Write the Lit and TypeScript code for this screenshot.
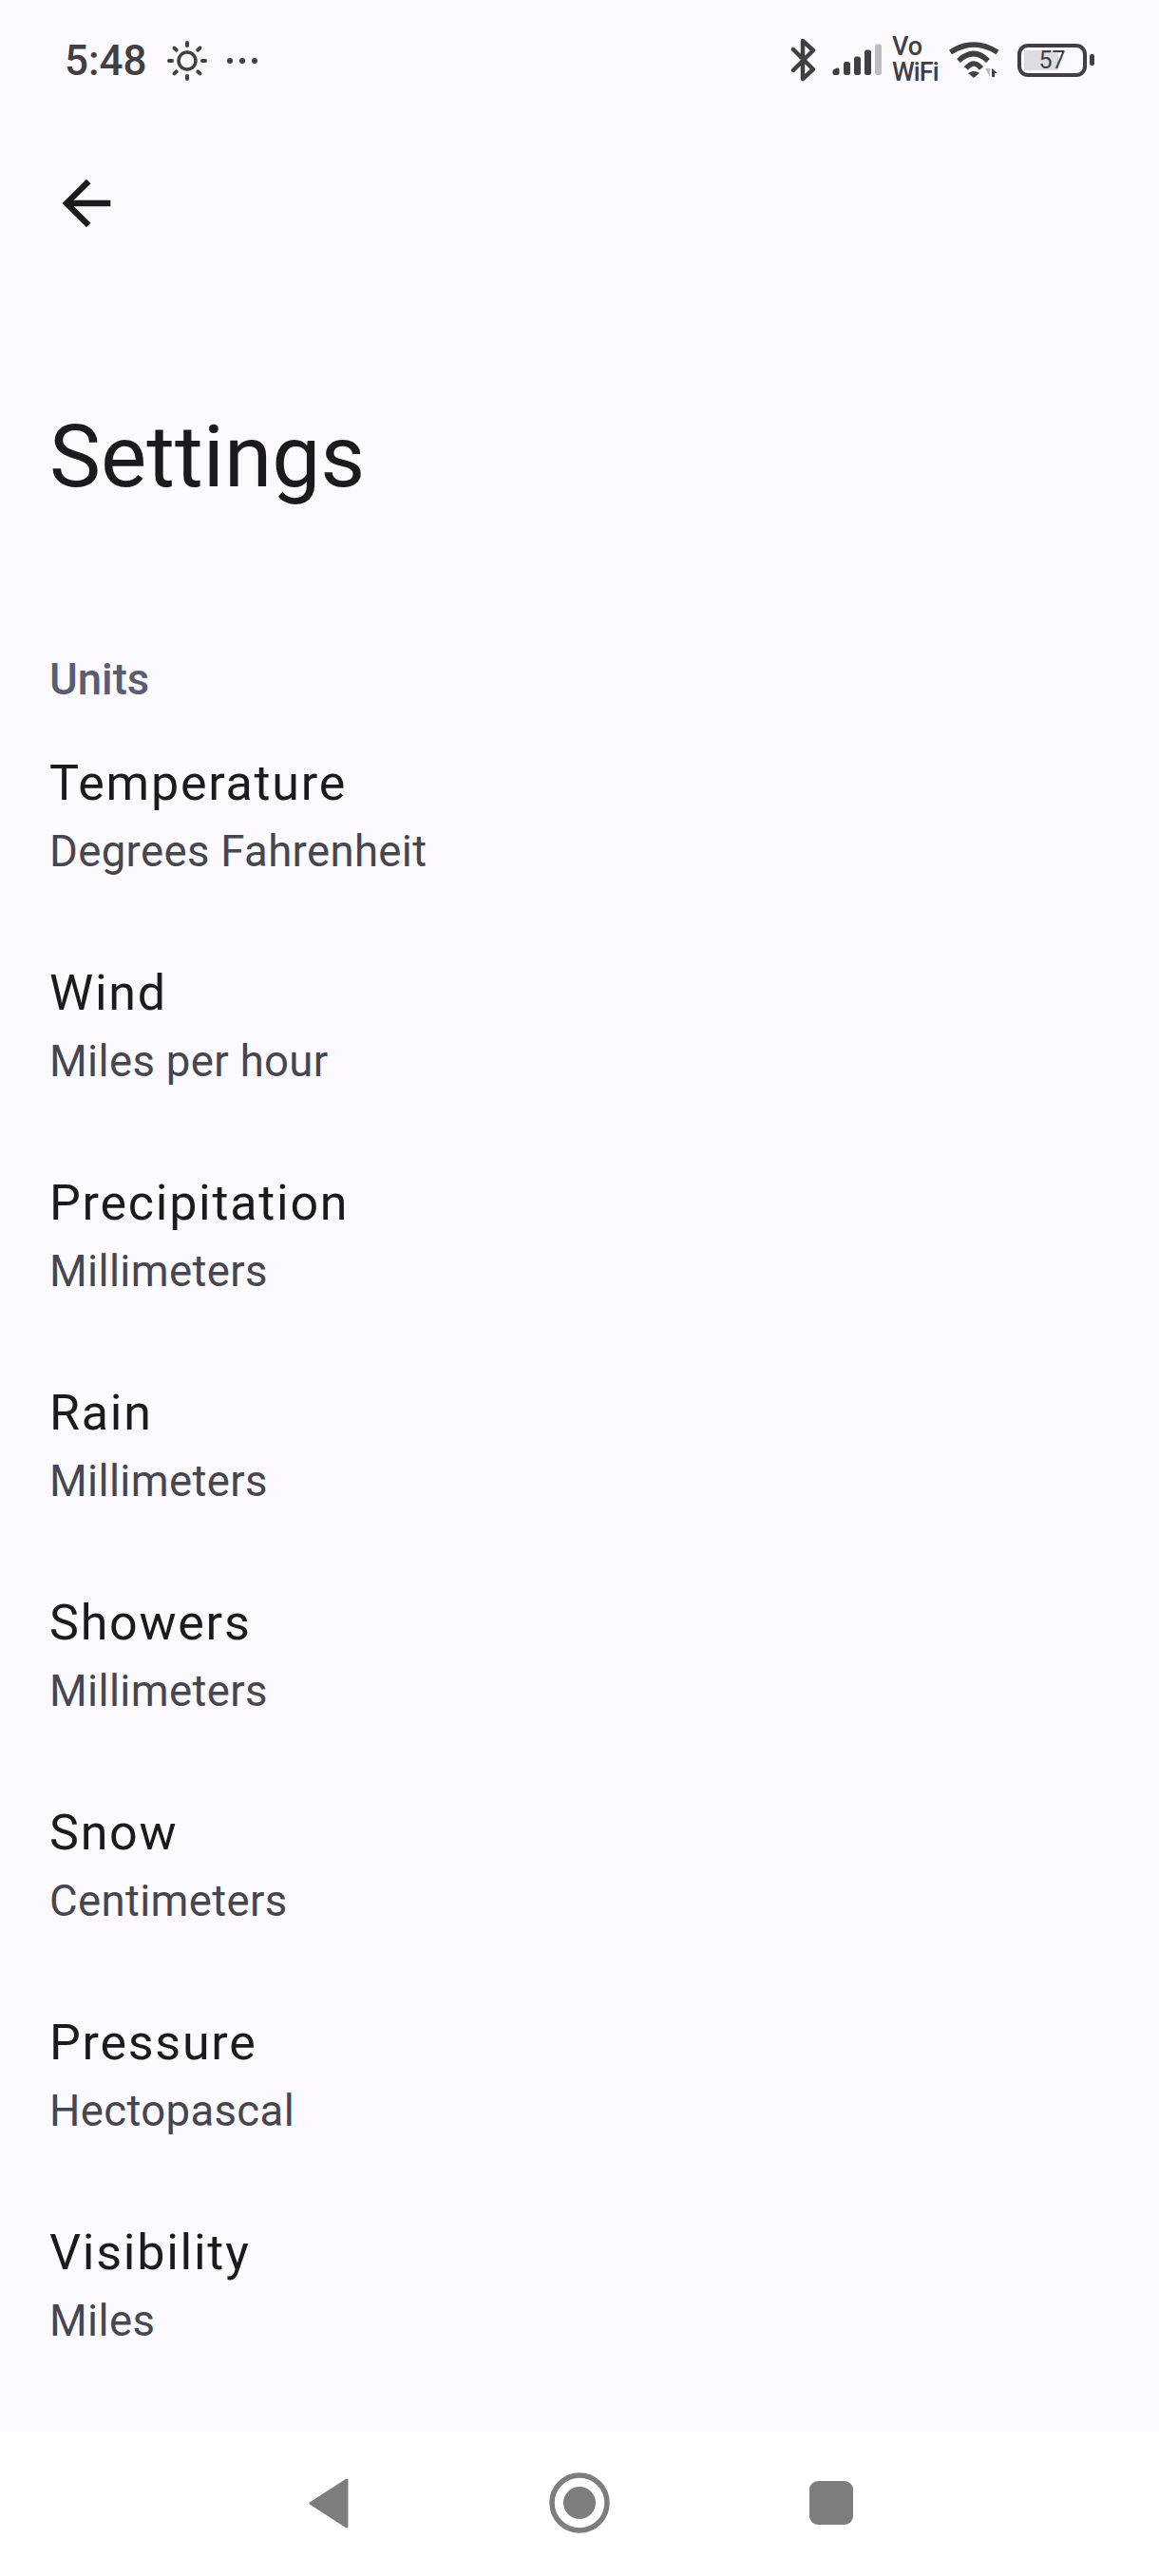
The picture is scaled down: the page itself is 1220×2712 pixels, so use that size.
import { LitElement, html, css, svg } from 'lit';
import { customElement } from 'lit/decorators.js';

// one entry per row of the Units section
const UNITS = [
  { title: 'Temperature', value: 'Degrees Fahrenheit' },
  { title: 'Wind', value: 'Miles per hour' },
  { title: 'Precipitation', value: 'Millimeters' },
  { title: 'Rain', value: 'Millimeters' },
  { title: 'Showers', value: 'Millimeters' },
  { title: 'Snow', value: 'Centimeters' },
  { title: 'Pressure', value: 'Hectopascal' },
  { title: 'Visibility', value: 'Miles' },
];

const SUN_RAYS = [0, 45, 90, 135, 180, 225, 270, 315];

@customElement('app-root')
export class AppRoot extends LitElement {
  static styles = css`
    :host {
      display: flex;
      flex-direction: column;
      width: 1220px;
      height: 2712px;
      background: #fcf9ff;
      font-family: Roboto, 'Liberation Sans', sans-serif;
      color: #1b1b1f;
      overflow: hidden;
    }

    .status {
      display: flex;
      align-items: center;
      height: 126px;
      padding: 0 68px;
      color: #3f3f44;
      flex: none;
    }

    .time {
      font-size: 44px;
      font-weight: 500;
      line-height: 50px;
      margin: 2px 20px 0 0;
    }

    .sun {
      width: 44px;
      height: 44px;
      margin: 2px 20px 0 0;
    }

    .more {
      width: 32px;
      height: 8px;
      margin-top: 2px;
    }

    .right {
      display: flex;
      align-items: center;
      margin-left: auto;
    }

    .bt {
      width: 27px;
      height: 46px;
      margin-right: 17px;
    }

    .signal {
      width: 52px;
      height: 34px;
      margin-right: 11px;
    }

    .vowifi {
      width: 48px;
      font-size: 27px;
      font-weight: 500;
      line-height: 27px;
      margin-right: 12px;
    }

    .vowifi div {
      height: 27px;
    }

    .wifi-label {
      letter-spacing: -0.9px;
    }

    .wifi {
      width: 53px;
      height: 38px;
      margin-right: 19px;
    }

    .battery {
      display: flex;
      align-items: center;
      justify-content: center;
      box-sizing: border-box;
      width: 73px;
      height: 35px;
      border: 4px solid #3f3f44;
      border-radius: 11px;
      font-size: 25px;
      line-height: 27px;
      background: linear-gradient(90deg, #dcdce1 0, #dcdce1 36px, transparent 36px) no-repeat 3px 3px / calc(100% - 6px) calc(100% - 6px);
    }

    .nub {
      width: 5px;
      height: 12px;
      margin-left: 3px;
      border-radius: 2px;
      background: #3f3f44;
    }

    .toolbar {
      height: 300px;
      padding: 50px 0 0 53px;
      box-sizing: border-box;
      flex: none;
    }

    .back {
      display: block;
      width: 76px;
      height: 76px;
      fill: #1b1b1f;
    }

    h1 {
      margin: 0;
      padding-left: 52px;
      font-size: 91px;
      font-weight: 400;
      line-height: 110px;
    }

    .section {
      margin: 152px 0 0;
      padding: 0 52px;
      font-size: 45.5px;
      font-weight: 500;
      line-height: 56px;
      color: #5a5d72;
    }

    .list {
      flex: 1;
      padding-top: 42px;
    }

    .row {
      box-sizing: border-box;
      height: 221px;
      padding: 0 52px;
    }

    .row-title {
      font-size: 52px;
      line-height: 78px;
      letter-spacing: 1.75px;
    }

    .row-value {
      font-size: 45.5px;
      line-height: 65px;
      letter-spacing: 0.35px;
      color: #46464f;
    }

    .nav {
      display: flex;
      align-items: center;
      justify-content: center;
      height: 154px;
      background: #fff;
      flex: none;
    }

    .nav-btn {
      display: flex;
      align-items: center;
      justify-content: center;
      width: 264.5px;
    }

    .nav-back {
      width: 42px;
      height: 53px;
    }

    .nav-home {
      width: 64px;
      height: 64px;
    }

    .nav-recent {
      width: 46px;
      height: 46px;
      border-radius: 9px;
      background: #7d7d7d;
    }
  `;

  private statusBar() {
    return html`
      <div class="status">
        <span class="time">5:48</span>
        <svg class="sun" viewBox="0 0 44 44" fill="none" stroke="currentColor" stroke-linecap="round">
          <circle cx="22" cy="22" r="9" stroke-width="3.5" />
          ${SUN_RAYS.map(
            (deg) => svg`<line x1="22" y1="3" x2="22" y2="6" stroke-width="4" transform="rotate(${deg} 22 22)" />`
          )}
        </svg>
        <svg class="more" viewBox="0 0 32 8" fill="currentColor">
          <circle cx="3" cy="4" r="3" />
          <circle cx="16" cy="4" r="3" />
          <circle cx="29" cy="4" r="3" />
        </svg>
        <div class="right">
          <svg class="bt" viewBox="0 0 27 46" fill="none" stroke="currentColor" stroke-width="4.5" stroke-linecap="round" stroke-linejoin="round">
            <path d="M3 12 L24 33 L13 43 V3 L24 13 L3 34" />
          </svg>
          <svg class="signal" viewBox="0 0 52 34" fill="currentColor">
            <path d="M0.5 29 Q0.5 27.5 2 27 L5 25.5 Q7.5 25 7.5 27 V31 Q7.5 33 5.5 33 H2.5 Q0.5 33 0.5 31 Z" />
            <rect x="12" y="19" width="7" height="14" rx="2.5" />
            <rect x="23" y="13.5" width="7" height="19.5" rx="2.5" />
            <rect x="34" y="6.5" width="7" height="26.5" rx="2.5" />
            <rect x="45" y="0.5" width="7" height="32.5" rx="2.5" fill="#bdbdc0" />
          </svg>
          <div class="vowifi"><div>Vo</div><div class="wifi-label">WiFi</div></div>
          <svg class="wifi" viewBox="0 0 53 38">
            <g fill="none" stroke="currentColor" stroke-width="5.5">
              <path d="M1.5 11 Q26 -5 51 11" />
              <path d="M10 20 Q26 5 41 20" />
              <path d="M18 28 Q26 18 34 28" />
            </g>
            <path d="M20 33 Q26 29 32 33 L26 38 Z" fill="currentColor" />
            <path d="M38 28 H43 V37 Z" fill="#bdbdc0" />
            <path d="M45 37 V28 L51 33 H48 V37 Z" fill="currentColor" />
          </svg>
          <div class="battery">57</div>
          <div class="nub"></div>
        </div>
      </div>
    `;
  }

  render() {
    return html`
      ${this.statusBar()}
      <div class="toolbar">
        <svg class="back" viewBox="0 0 24 24">
          <path d="M20 11H7.83l5.59-5.59L12 4l-8 8 8 8 1.41-1.41L7.83 13H20v-2z" />
        </svg>
      </div>
      <h1>Settings</h1>
      <h2 class="section">Units</h2>
      <div class="list">
        ${UNITS.map(
          (u) => html`
            <div class="row">
              <div class="row-title">${u.title}</div>
              <div class="row-value">${u.value}</div>
            </div>
          `
        )}
      </div>
      <div class="nav">
        <div class="nav-btn">
          <svg class="nav-back" viewBox="0 0 42 53" fill="#7d7d7d" stroke="#7d7d7d" stroke-width="3" stroke-linejoin="round">
            <path d="M40 2 V51 L2 26.5 Z" />
          </svg>
        </div>
        <div class="nav-btn">
          <svg class="nav-home" viewBox="0 0 64 64">
            <circle cx="32" cy="32" r="29" fill="none" stroke="#7d7d7d" stroke-width="5.5" />
            <circle cx="32" cy="32" r="17" fill="#7d7d7d" />
          </svg>
        </div>
        <div class="nav-btn"><div class="nav-recent"></div></div>
      </div>
    `;
  }
}
